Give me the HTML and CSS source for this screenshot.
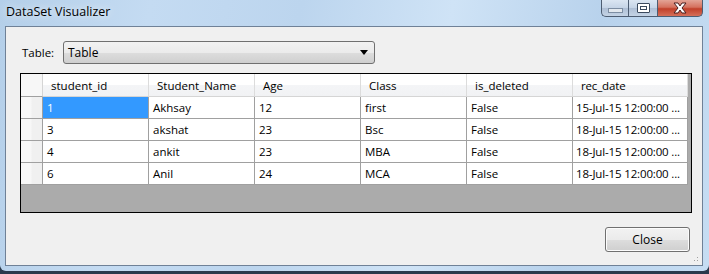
FILE: index.html
```html
<!DOCTYPE html>
<html>
<head>
<meta charset="utf-8">
<link rel="stylesheet" href="styles.css">
</head>
<body>
<div class="window">
  <div class="titlebar">
    <div class="title">DataSet Visualizer</div>
    <div class="caption">
      <div class="cbtn min"><span class="min-glyph"></span></div>
      <div class="cbtn max"><span class="max-glyph"></span></div>
      <div class="cbtn close"><svg width="16" height="12" viewBox="0 0 16 12"><path d="M2 1h4l2 3 2-3h4l-4 5 4 5h-4l-2-3-2 3H2l4-5z" fill="#fff" stroke="#4a2020" stroke-width="1"/></svg></div>
    </div>
  </div>
  <div class="client">
    <div class="toprow">
      <span class="label">Table:</span>
      <div class="combo"><span>Table</span><svg class="arrow" width="8" height="5" viewBox="0 0 8 5"><path d="M0 0h8L4 5z" fill="#000"/></svg></div>
    </div>
    <div class="grid">
      <div class="row head">
        <div class="rh"></div>
        <div class="c">student_id</div>
        <div class="c">Student_Name</div>
        <div class="c">Age</div>
        <div class="c">Class</div>
        <div class="c">is_deleted</div>
        <div class="c last">rec_date</div>
      </div>
      <div class="row">
        <div class="rh"></div>
        <div class="c sel">1</div>
        <div class="c">Akhsay</div>
        <div class="c">12</div>
        <div class="c">first</div>
        <div class="c">False</div>
        <div class="c last">15-Jul-15 12:00:00 ...</div>
      </div>
      <div class="row">
        <div class="rh"></div>
        <div class="c">3</div>
        <div class="c">akshat</div>
        <div class="c">23</div>
        <div class="c">Bsc</div>
        <div class="c">False</div>
        <div class="c last">18-Jul-15 12:00:00 ...</div>
      </div>
      <div class="row">
        <div class="rh"></div>
        <div class="c">4</div>
        <div class="c">ankit</div>
        <div class="c">23</div>
        <div class="c">MBA</div>
        <div class="c">False</div>
        <div class="c last">18-Jul-15 12:00:00 ...</div>
      </div>
      <div class="row">
        <div class="rh"></div>
        <div class="c">6</div>
        <div class="c">Anil</div>
        <div class="c">24</div>
        <div class="c">MCA</div>
        <div class="c">False</div>
        <div class="c last">18-Jul-15 12:00:00 ...</div>
      </div>
    </div>
    <div class="bottom">
      <div class="button">Close</div>
    </div>
    <div class="grip"></div>
  </div>
</div>
</body>
</html>
```
FILE: styles.css
```css
* { box-sizing: border-box; }
html, body { margin: 0; padding: 0; }
body {
  width: 709px; height: 274px; overflow: hidden;
  font-family: "Open Sans", "Noto Sans", sans-serif;
  font-size: 11.5px; color: #000;
  background: #2b3a4c;
}
.window {
  width: 709px; height: 271px;
  background: linear-gradient(100deg, #b4cfe9 0%, #c4dbf2 20%, #bcd5ee 40%, #cfe3f6 60%, #b8d2ec 80%, #c6ddf3 100%);
  border-radius: 0 0 6px 6px;
  display: flex; flex-direction: column;
  padding: 0 6px 5px 5px;
}
.titlebar {
  height: 26px; display: flex; justify-content: space-between; align-items: flex-start;
}
.title {
  font-size: 12.5px; padding: 3px 0 0 1px; color: #000;
  text-shadow: 0 0 8px #fff;
}
.caption { display: flex; height: 17px; margin-right: 0; }
.cbtn {
  height: 17px; border: 1px solid #4d5d72; border-top: none;
  display: flex; align-items: center; justify-content: center;
}
.min, .max {
  width: 27px;
  background: linear-gradient(#dbe6f2 0%, #c5d4e6 50%, #aebfd5 51%, #c4d3e5 100%);
}
.min { border-radius: 0 0 0 5px; border-right: none; }
.max { width: 29px; border-right: none; }
.close {
  width: 46px; border-radius: 0 0 5px 0;
  background: linear-gradient(#e3a496 0%, #d5715e 45%, #c1402a 55%, #d5705a 100%);
}
.min-glyph {
  width: 15px; height: 5px; background: #e2e8ee; border: 1px solid #7d8ea3; margin-top: 4px;
}
.max-glyph {
  width: 13px; height: 10px; border: 1px solid #3a4a5e; background: #fff;
  box-shadow: inset 0 0 0 2px #fff, inset 0 0 0 3px #3a4a5e;
  border-radius: 1px;
}
.client {
  flex: 1; background: #f0f0f0; border: 1px solid #6f8197;
  position: relative; display: flex; flex-direction: column;
  padding: 13px 0 0 14px;
}
.toprow { display: flex; align-items: center; height: 24px; }
.label { width: 43px; padding-left: 2px; }
.combo {
  width: 312px; height: 23px;
  border: 1px solid #707070; border-radius: 3px;
  background: linear-gradient(#f2f2f2 0%, #ebebeb 50%, #dddddd 51%, #cfcfcf 100%);
  display: flex; align-items: center; justify-content: space-between;
  padding: 0 6px 0 4px;
}
.combo span { font-size: 12px; }
.grid {
  margin-top: 9px; width: 672px; height: 140px;
  border: 1px solid #000; background: #ababab;
  display: flex; flex-direction: column;
}
.row { display: flex; height: 22px; }
.row.head { height: 23px; }
.rh {
  width: 22px; border-right: 1px solid #a0a0a0; border-bottom: 1px solid #a0a0a0;
  background: linear-gradient(90deg, #f7f7f7 0, #f7f7f7 10px, #f0f0f0 11px, #f0f0f0 100%);
}
.head .rh { background: #f7f7f7; border-right-color: #d5d5d5; }
.c {
  width: 106px; background: #fff;
  border-right: 1px solid #a0a0a0; border-bottom: 1px solid #a0a0a0;
  padding: 0 0 0 4px; display: flex; align-items: center;
  white-space: nowrap; overflow: hidden;
}
.c.last { width: 115px; letter-spacing: -0.15px; padding-left: 3px; }
.head .c {
  background: linear-gradient(#ffffff 0%, #ffffff 50%, #f4f5f7 51%, #f1f2f4 100%);
  border-right: 1px solid #dcdcdc; border-bottom: 1px solid #d5d5d5;
  padding-left: 8px;
}
.c.sel { background: #3399ff; color: #fff; }
.bottom { display: flex; justify-content: flex-end; padding: 14px 12px 0 0; }
.button {
  width: 85px; height: 25px; border: 1px solid #707070; border-radius: 3px;
  background: linear-gradient(#f2f2f2 0%, #ebebeb 50%, #dddddd 51%, #cfcfcf 100%);
  display: flex; align-items: center; justify-content: center; font-size: 12px;
  box-shadow: inset 0 0 0 1px #fcfcfc;
}
.grip {
  position: absolute; right: 2px; bottom: 2px; width: 10px; height: 10px;
  background-image: radial-gradient(circle, #a0a0a0 0.8px, transparent 1px);
  background-size: 3px 3px;
  clip-path: polygon(100% 0, 100% 100%, 0 100%);
}
```
